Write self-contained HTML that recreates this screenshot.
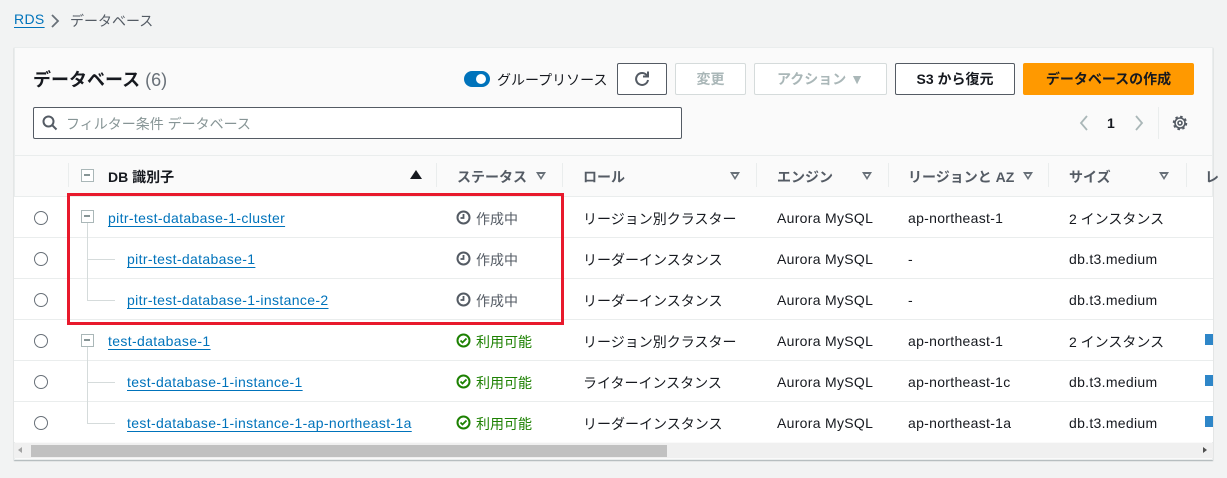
<!DOCTYPE html>
<html><head><meta charset="utf-8"><style>
*{box-sizing:border-box;margin:0;padding:0}
body{width:1227px;height:478px;background:#f2f3f3;font-family:"Liberation Sans","Noto Sans CJK JP",sans-serif;font-size:14px;color:#16191f;position:relative;overflow:hidden}
.a{position:absolute;white-space:nowrap}
.lnk{color:#0073bb;text-decoration:underline;text-underline-offset:3px;letter-spacing:0.35px;margin-top:1px}
.lt{letter-spacing:0.3px;margin-top:1px}
.btn{position:absolute;height:32px;border:1px solid #545b64;border-radius:2px;background:#fff;font-weight:bold;font-size:14px;display:flex;align-items:center;justify-content:center}
.dis{border-color:#d5dbdb;color:#aab7b8}
.row{position:absolute;left:14px;width:1199px;height:41px;background:#fff;border-top:1px solid #eaeded}
.rad{position:absolute;left:34px;width:14px;height:14px;border:1.5px solid #687078;border-radius:50%}
.hd{position:absolute;top:167px;font-weight:bold;color:#545b64}
.sep{position:absolute;top:163px;width:1px;height:24px;background:#eaeded}
.tri{position:absolute;top:172px;width:0;height:0;border-left:5px solid transparent;border-right:5px solid transparent;border-top:8px solid #687078}
.tri:after{content:"";position:absolute;left:-2px;top:-6px;border-left:2px solid transparent;border-right:2px solid transparent;border-top:3px solid #fff}
.box{position:absolute;left:81px;width:13px;height:13px;border:1.5px solid #aab7b8;background:#fff}
.box:after{content:"";position:absolute;left:2px;top:4px;width:6px;height:1.5px;background:#879596}
.vl{position:absolute;left:87px;width:1px;background:#d5dbdb}
.hl{position:absolute;left:87px;width:28px;height:1px;background:#d5dbdb}
.gray{color:#545b64}
.green{color:#1d8102}
</style></head><body>
<div class="a lnk" style="left:14px;top:10px;color:#0073bb">RDS</div>
<svg class="a" style="left:50px;top:14px" width="10" height="14"><path d="M2 1l6 6-6 6" stroke="#687078" stroke-width="1.8" fill="none"/></svg>
<div class="a" style="left:70px;top:11px;color:#545b64">データベース</div>

<div class="a" style="left:14px;top:47px;width:1199px;height:413px;background:#fafafa;border:1px solid #eaeded;box-shadow:0 1px 1px rgba(0,28,36,.3)"></div>
<div class="a" style="left:33px;top:66px;font-size:18px;font-weight:bold">データベース <span style="font-weight:normal;color:#687078">(6)</span></div>

<div class="a" style="left:464px;top:71px;width:26px;height:16px;border-radius:8px;background:#0073bb"></div>
<div class="a" style="left:476px;top:74px;width:10px;height:10px;border-radius:50%;background:#fff"></div>
<div class="a" style="left:497px;top:70px">グループリソース</div>

<div class="btn" style="left:617px;top:63px;width:50px"><svg width="18" height="18" viewBox="0 0 18 18"><path d="M14 5.5A6 6 0 1 0 15 10" stroke="#545b64" stroke-width="2" fill="none"/><path d="M15 1.5v5h-5" stroke="#545b64" stroke-width="2" fill="none"/></svg></div>
<div class="btn dis" style="left:675px;top:63px;width:71px">変更</div>
<div class="btn dis" style="left:754px;top:63px;width:133px">アクション ▼</div>
<div class="btn" style="left:895px;top:63px;width:120px;color:#16191f">S3 から復元</div>
<div class="btn" style="left:1023px;top:63px;width:171px;background:#ff9900;border-color:#ff9900;color:#16191f">データベースの作成</div>

<div class="a" style="left:33px;top:107px;width:649px;height:32px;border:1px solid #545b64;border-radius:2px;background:#fff"></div>
<svg class="a" style="left:42px;top:115px" width="16" height="16"><circle cx="6.5" cy="6.5" r="5" stroke="#545b64" stroke-width="2" fill="none"/><path d="M10 10l4.5 4.5" stroke="#545b64" stroke-width="2"/></svg>
<div class="a" style="left:66px;top:114px;color:#879596">フィルター条件 データベース</div>

<svg class="a" style="left:1078px;top:114px" width="12" height="18"><path d="M9 2L3 9l6 7" stroke="#aab7b8" stroke-width="1.8" fill="none"/></svg>
<div class="a" style="left:1107px;top:115px;font-weight:bold">1</div>
<svg class="a" style="left:1133px;top:114px" width="12" height="18"><path d="M3 2l6 7-6 7" stroke="#aab7b8" stroke-width="1.8" fill="none"/></svg>
<div class="a" style="left:1158px;top:107px;width:1px;height:32px;background:#eaeded"></div>
<svg class="a" style="left:1171px;top:114px" width="18" height="18" viewBox="0 0 18 18"><circle cx="9" cy="9" r="6" stroke="#545b64" stroke-width="2.5" fill="none" stroke-dasharray="2.4 2.3"/><circle cx="9" cy="9" r="5" stroke="#545b64" stroke-width="1.6" fill="none"/><circle cx="9" cy="9" r="2" stroke="#545b64" stroke-width="1.6" fill="none"/></svg>

<div class="a" style="left:14px;top:155px;width:1199px;height:1px;background:#eaeded"></div>
<div class="sep" style="left:68px"></div>
<div class="box" style="top:169px"></div>
<div class="hd" style="left:108px;color:#16191f">DB 識別子</div>
<div class="a" style="left:410px;top:170px;border-left:6px solid transparent;border-right:6px solid transparent;border-bottom:9px solid #16191f"></div>
<div class="sep" style="left:436px"></div>
<div class="hd" style="left:457px">ステータス</div><div class="tri" style="left:536px"></div>
<div class="sep" style="left:562px"></div>
<div class="hd" style="left:583px">ロール</div><div class="tri" style="left:730px"></div>
<div class="sep" style="left:756px"></div>
<div class="hd" style="left:777px">エンジン</div><div class="tri" style="left:862px"></div>
<div class="sep" style="left:888px"></div>
<div class="hd" style="left:908px">リージョンと AZ</div><div class="tri" style="left:1023px"></div>
<div class="sep" style="left:1048px"></div>
<div class="hd" style="left:1069px">サイズ</div><div class="tri" style="left:1159px"></div>
<div class="sep" style="left:1186px"></div>
<div class="hd" style="left:1205px">レ</div>

<div class="row" style="top:196px"></div>
<div class="row" style="top:237px"></div>
<div class="row" style="top:278px"></div>
<div class="row" style="top:319px"></div>
<div class="row" style="top:360px"></div>
<div class="row" style="top:401px"></div>

<div class="rad" style="top:211px"></div><div class="rad" style="top:252px"></div><div class="rad" style="top:293px"></div>
<div class="rad" style="top:334px"></div><div class="rad" style="top:375px"></div><div class="rad" style="top:416px"></div>

<div class="vl" style="top:222px;height:78px"></div><div class="hl" style="top:259px"></div><div class="hl" style="top:300px"></div>
<div class="vl" style="top:345px;height:78px"></div><div class="hl" style="top:382px"></div><div class="hl" style="top:423px"></div>
<div class="box" style="top:210px"></div><div class="box" style="top:334px"></div>

<div class="a lnk" style="left:108px;top:209px">pitr-test-database-1-cluster</div>
<div class="a lnk" style="left:127px;top:250px">pitr-test-database-1</div>
<div class="a lnk" style="left:127px;top:291px">pitr-test-database-1-instance-2</div>
<div class="a lnk" style="left:108px;top:332px">test-database-1</div>
<div class="a lnk" style="left:127px;top:373px">test-database-1-instance-1</div>
<div class="a lnk" style="left:127px;top:414px">test-database-1-instance-1-ap-northeast-1a</div>

<svg class="a" style="left:456px;top:210px" width="15" height="15"><circle cx="7.5" cy="7.5" r="6" stroke="#545b64" stroke-width="2" fill="none"/><path d="M7.5 4v4H4.5" stroke="#545b64" stroke-width="1.8" fill="none"/></svg>
<div class="a gray" style="left:476px;top:209px">作成中</div>
<svg class="a" style="left:456px;top:251px" width="15" height="15"><circle cx="7.5" cy="7.5" r="6" stroke="#545b64" stroke-width="2" fill="none"/><path d="M7.5 4v4H4.5" stroke="#545b64" stroke-width="1.8" fill="none"/></svg>
<div class="a gray" style="left:476px;top:250px">作成中</div>
<svg class="a" style="left:456px;top:292px" width="15" height="15"><circle cx="7.5" cy="7.5" r="6" stroke="#545b64" stroke-width="2" fill="none"/><path d="M7.5 4v4H4.5" stroke="#545b64" stroke-width="1.8" fill="none"/></svg>
<div class="a gray" style="left:476px;top:291px">作成中</div>
<svg class="a" style="left:456px;top:333px" width="15" height="15"><circle cx="7.5" cy="7.5" r="6" stroke="#1d8102" stroke-width="2" fill="none"/><path d="M4.5 7.5l2 2 4-4" stroke="#1d8102" stroke-width="1.8" fill="none"/></svg>
<div class="a green" style="left:476px;top:332px">利用可能</div>
<svg class="a" style="left:456px;top:374px" width="15" height="15"><circle cx="7.5" cy="7.5" r="6" stroke="#1d8102" stroke-width="2" fill="none"/><path d="M4.5 7.5l2 2 4-4" stroke="#1d8102" stroke-width="1.8" fill="none"/></svg>
<div class="a green" style="left:476px;top:373px">利用可能</div>
<svg class="a" style="left:456px;top:415px" width="15" height="15"><circle cx="7.5" cy="7.5" r="6" stroke="#1d8102" stroke-width="2" fill="none"/><path d="M4.5 7.5l2 2 4-4" stroke="#1d8102" stroke-width="1.8" fill="none"/></svg>
<div class="a green" style="left:476px;top:414px">利用可能</div>

<div class="a" style="left:583px;top:209px">リージョン別クラスター</div>
<div class="a" style="left:583px;top:250px">リーダーインスタンス</div>
<div class="a" style="left:583px;top:291px">リーダーインスタンス</div>
<div class="a" style="left:583px;top:332px">リージョン別クラスター</div>
<div class="a" style="left:583px;top:373px">ライターインスタンス</div>
<div class="a" style="left:583px;top:414px">リーダーインスタンス</div>

<div class="a lt" style="left:777px;top:209px">Aurora MySQL</div>
<div class="a lt" style="left:777px;top:250px">Aurora MySQL</div>
<div class="a lt" style="left:777px;top:291px">Aurora MySQL</div>
<div class="a lt" style="left:777px;top:332px">Aurora MySQL</div>
<div class="a lt" style="left:777px;top:373px">Aurora MySQL</div>
<div class="a lt" style="left:777px;top:414px">Aurora MySQL</div>

<div class="a lt" style="left:908px;top:209px">ap-northeast-1</div>
<div class="a lt" style="left:908px;top:250px">-</div>
<div class="a lt" style="left:908px;top:291px">-</div>
<div class="a lt" style="left:908px;top:332px">ap-northeast-1</div>
<div class="a lt" style="left:908px;top:373px">ap-northeast-1c</div>
<div class="a lt" style="left:908px;top:414px">ap-northeast-1a</div>

<div class="a" style="left:1069px;top:209px">2 インスタンス</div>
<div class="a lt" style="left:1069px;top:250px">db.t3.medium</div>
<div class="a lt" style="left:1069px;top:291px">db.t3.medium</div>
<div class="a" style="left:1069px;top:332px">2 インスタンス</div>
<div class="a lt" style="left:1069px;top:373px">db.t3.medium</div>
<div class="a lt" style="left:1069px;top:414px">db.t3.medium</div>

<div class="a" style="left:1205px;top:334px;width:8px;height:11px;background:#2e86c8"></div>
<div class="a" style="left:1205px;top:375px;width:8px;height:11px;background:#2e86c8"></div>
<div class="a" style="left:1205px;top:416px;width:8px;height:11px;background:#2e86c8"></div>

<div class="a" style="left:14px;top:443px;width:1199px;height:15px;background:#f0f0f0"></div>
<div class="a" style="left:31px;top:445px;width:636px;height:12px;background:#c1c1c1"></div>
<div class="a" style="left:18px;top:447px;border-top:3px solid transparent;border-bottom:3px solid transparent;border-right:4px solid #a3a3a3"></div>
<div class="a" style="left:1203px;top:447px;border-top:3px solid transparent;border-bottom:3px solid transparent;border-left:4px solid #505050"></div>

<div class="a" style="left:67px;top:193px;width:497px;height:132px;border:3px solid #e8192c"></div>
</body></html>
